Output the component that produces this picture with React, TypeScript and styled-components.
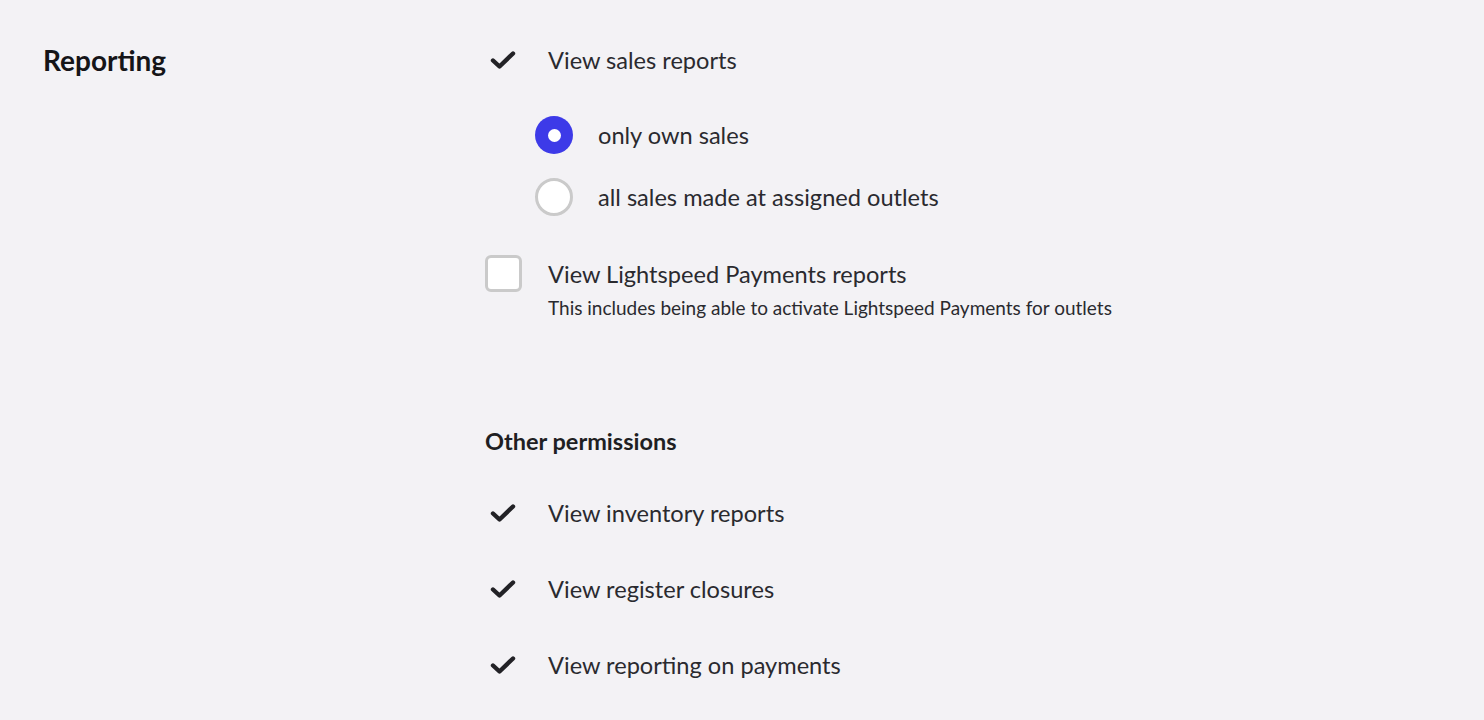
import styled, { createGlobalStyle } from "styled-components";

const GlobalStyle = createGlobalStyle`
  html, body {
    margin: 0;
    padding: 0;
    background: #f3f2f5;
  }
  body {
    font-family: Lato, "Open Sans", sans-serif;
    color: #2a2a2f;
  }
`;

const Page = styled.div`
  display: grid;
  grid-template-columns: 442px 1fr;
  padding: 40px 43px 0;
  min-height: 720px;
  box-sizing: border-box;
`;

const SectionTitle = styled.h2`
  margin: 0;
  font-size: 28px;
  font-weight: 700;
  line-height: 40px;
  color: #151518;
`;

const Content = styled.div`
  display: flex;
  flex-direction: column;
`;

const Row = styled.div`
  display: grid;
  grid-template-columns: 63px 1fr;
  align-items: center;
  min-height: 40px;
`;

const Label = styled.span`
  font-size: 23.6px;
  line-height: 30px;
`;

const Sub = styled.div`
  font-size: 19px;
  line-height: 24px;
  margin-top: 7px;
`;

const IconCell = styled.div`
  display: flex;
  align-items: center;
  padding-left: 5px;
`;

const RadioGroup = styled.div`
  display: flex;
  flex-direction: column;
  gap: 24px;
  padding: 36px 0 0 50px;
`;

const RadioRow = styled.label`
  display: flex;
  align-items: center;
  gap: 25px;
`;

const Radio = styled.span<{ $checked?: boolean }>`
  width: 38px;
  height: 38px;
  border-radius: 50%;
  box-sizing: border-box;
  display: flex;
  align-items: center;
  justify-content: center;
  background: ${(p) => (p.$checked ? "#3d3ae8" : "#fff")};
  border: ${(p) => (p.$checked ? "none" : "3px solid #cacaca")};
  &::after {
    content: "";
    display: ${(p) => (p.$checked ? "block" : "none")};
    width: 13px;
    height: 13px;
    border-radius: 50%;
    background: #fff;
  }
`;

const CheckRow = styled.div`
  display: grid;
  grid-template-columns: 63px 1fr;
  margin-top: 39px;
`;

const CheckText = styled.div`
  padding-top: 4px;
`;

const Box = styled.span`
  width: 37px;
  height: 37px;
  box-sizing: border-box;
  border: 3px solid #cacaca;
  border-radius: 6px;
  background: #fff;
`;

const SubTitle = styled.h3`
  margin: 106px 0 0;
  font-size: 23.5px;
  font-weight: 700;
  line-height: 30px;
  color: #1f1f23;
`;

const OtherList = styled.div`
  display: flex;
  flex-direction: column;
  gap: 36px;
  margin-top: 37px;
`;

const Check = () => (
  <svg width="26" height="20" viewBox="0 0 26 20">
    <path d="M3 10.5 L9.5 16.5 L23 3.5" fill="none" stroke="#222226" strokeWidth="4.4" strokeLinecap="round" strokeLinejoin="round" />
  </svg>
);

export default function App() {
  return (
    <>
      <GlobalStyle />
      <Page>
        <SectionTitle>Reporting</SectionTitle>
        <Content>
          <Row>
            <IconCell><Check /></IconCell>
            <Label>View sales reports</Label>
          </Row>
          <RadioGroup>
            <RadioRow>
              <Radio $checked />
              <Label>only own sales</Label>
            </RadioRow>
            <RadioRow>
              <Radio />
              <Label>all sales made at assigned outlets</Label>
            </RadioRow>
          </RadioGroup>
          <CheckRow>
            <Box />
            <CheckText>
              <Label>View Lightspeed Payments reports</Label>
              <Sub>This includes being able to activate Lightspeed Payments for outlets</Sub>
            </CheckText>
          </CheckRow>
          <SubTitle>Other permissions</SubTitle>
          <OtherList>
            {["View inventory reports", "View register closures", "View reporting on payments"].map((t) => (
              <Row key={t}>
                <IconCell><Check /></IconCell>
                <Label>{t}</Label>
              </Row>
            ))}
          </OtherList>
        </Content>
      </Page>
    </>
  );
}
